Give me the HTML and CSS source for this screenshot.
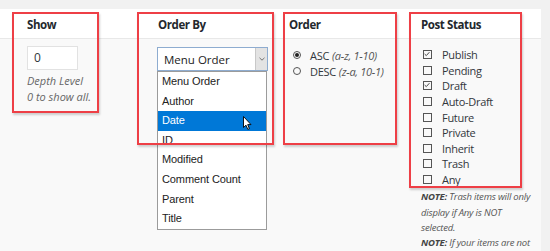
FILE: index.html
```html
<!DOCTYPE html>
<html>
<head>
<meta charset="utf-8">
<link rel="stylesheet" href="styles.css">
</head>
<body>
<div class="topbar"></div>
<div class="wrap">
  <div class="panel">
    <div class="row head">
      <div class="th">Show</div>
      <div class="th">Order By</div>
      <div class="th">Order</div>
      <div class="th">Post Status</div>
    </div>
    <div class="row body">
      <div class="col show">
        <div class="num">0</div>
        <div class="help">Depth Level<br>0 to show all.</div>
      </div>
      <div class="col orderby">
        <div class="select">
          <span class="sel-text">Menu Order</span>
          <span class="sel-btn"><svg width="6" height="4" viewBox="0 0 6 4"><path d="M0.5 0.8 L3 3.2 L5.5 0.8" fill="none" stroke="#666" stroke-width="0.9"/></svg></span>
        </div>
        <ul class="listbox">
          <li>Menu Order</li>
          <li>Author</li>
          <li class="hl">Date</li>
          <li>ID</li>
          <li>Modified</li>
          <li>Comment Count</li>
          <li>Parent</li>
          <li>Title</li>
        </ul>
      </div>
      <div class="col order">
        <div class="opt"><span class="radio on"></span>ASC <em>(a-z, 1-10)</em></div>
        <div class="opt"><span class="radio"></span>DESC <em>(z-a, 10-1)</em></div>
      </div>
      <div class="col status">
        <div class="chk"><span class="box on"><svg width="8" height="8" viewBox="0 0 8 8"><path d="M1.6 4 L3.3 5.6 L6.4 2.2" fill="none" stroke="#333" stroke-width="0.9"/></svg></span>Publish</div>
        <div class="chk"><span class="box"></span>Pending</div>
        <div class="chk"><span class="box on"><svg width="8" height="8" viewBox="0 0 8 8"><path d="M1.6 4 L3.3 5.6 L6.4 2.2" fill="none" stroke="#333" stroke-width="0.9"/></svg></span>Draft</div>
        <div class="chk"><span class="box"></span>Auto-Draft</div>
        <div class="chk"><span class="box"></span>Future</div>
        <div class="chk"><span class="box"></span>Private</div>
        <div class="chk"><span class="box"></span>Inherit</div>
        <div class="chk"><span class="box"></span>Trash</div>
        <div class="chk"><span class="box"></span>Any</div>
        <div class="note"><b>NOTE:</b> Trash items will only<br>display if Any is NOT<br>selected.<br><b>NOTE:</b> If your items are not</div>
      </div>
    </div>
  </div>
  <div class="side"></div>
</div>
<div class="mark m1"></div>
<div class="mark m2"></div>
<div class="mark m3"></div>
<div class="mark m4"></div>
<svg class="cursor" width="10" height="15" viewBox="0 0 10 15"><path d="M0.5 0.5 L0.5 11.5 L3 9.2 L4.8 13.4 L6.4 12.7 L4.7 8.6 L8 8.6 Z" fill="#fff" stroke="#000" stroke-width="0.9" stroke-linejoin="round"/></svg>
</body>
</html>
```
FILE: styles.css
```css
html, body {
  margin: 0;
  padding: 0;
}
body {
  width: 550px;
  height: 251px;
  overflow: hidden;
  background: #f1f1f1;
  font-family: "Open Sans", "Noto Sans", sans-serif;
  color: #32373c;
  position: relative;
}
.topbar {
  height: 9px;
  background: #f1f1f1;
}
.wrap {
  display: flex;
  height: 242px;
}
.panel {
  width: 541px;
  background: #f9f9f9;
}
.side {
  flex: 1;
  background: #f1f1f1;
}
.row {
  display: grid;
  grid-template-columns: 131px 131px 132px 1fr;
  padding-left: 27px;
}
.head {
  height: 29px;
  background: #fff;
  border-bottom: 1px solid #e8e8e8;
  align-items: center;
}
.th {
  font-size: 11.5px;
  font-weight: 700;
  letter-spacing: -0.4px;
  color: #23282d;
  padding-top: 1px;
}
.body {
  padding-top: 7px;
}
.num {
  height: 22px;
  border: 1px solid #e2e2e2;
  background: #fff;
  font-size: 12px;
  line-height: 22px;
  padding-left: 6px;
  width: 43px;
  color: #32373c;
}
.help {
  margin-top: 3px;
  font-size: 11px;
  font-style: italic;
  letter-spacing: 0;
  line-height: 16px;
  color: #666;
}
.orderby {
  margin-left: -1px;
  padding-top: 1px;
}
.select {
  width: 109px;
  height: 22px;
  border: 1px solid #8eacd0;
  background: #fff;
  display: flex;
  align-items: center;
}
.sel-text {
  flex: 1;
  font-size: 11.5px;
  padding-left: 6px;
  color: #222;
}
.sel-btn {
  width: 11px;
  height: 22px;
  background: #e3e3e3;
  border-left: 1px solid #c8c8c8;
  display: flex;
  align-items: center;
  justify-content: center;
}
.listbox {
  list-style: none;
  margin: 0;
  padding: 0;
  width: 108px;
  border: 1px solid #9b9b9b;
  background: #fff;
}
.listbox li {
  height: 19.6px;
  line-height: 19.6px;
  padding-left: 4px;
  font-family: "Liberation Sans", sans-serif;
  font-size: 11px;
  letter-spacing: -0.1px;
  color: #222;
}
.listbox li.hl {
  background: #0078d7;
  color: #fff;
}
.order {
  padding-top: 1px;
  padding-left: 4px;
}
.opt {
  display: flex;
  align-items: center;
  height: 16px;
  font-size: 11px;
  letter-spacing: -0.3px;
  color: #32373c;
}
.opt em {
  margin-left: 3px;
  color: #555;
}
.radio {
  width: 6px;
  height: 6px;
  border: 1px solid #555;
  border-radius: 50%;
  margin-right: 9px;
  position: relative;
  flex: none;
}
.radio.on::after {
  content: "";
  position: absolute;
  left: 1px;
  top: 1px;
  width: 4px;
  height: 4px;
  border-radius: 50%;
  background: #222;
}
.status {
  padding-top: 1px;
  padding-left: 2px;
}
.chk {
  display: flex;
  align-items: center;
  height: 15.6px;
  font-size: 11px;
  letter-spacing: -0.3px;
  color: #32373c;
}
.box {
  width: 7px;
  height: 7px;
  border: 1px solid #555;
  margin-right: 10px;
  flex: none;
  position: relative;
}
.box svg {
  position: absolute;
  left: -1px;
  top: -1px;
}
.note {
  margin-top: 2px;
  margin-left: -2px;
  font-size: 9.5px;
  font-style: italic;
  letter-spacing: -0.2px;
  line-height: 15.3px;
  color: #555;
  white-space: nowrap;
}
.note b {
  color: #444;
}
.mark {
  position: absolute;
  border: 2px solid #ee3f46;
  box-shadow: 1px 2px 2px rgba(0, 0, 0, 0.18);
  box-sizing: border-box;
}
.m1 { left: 12px; top: 12px; width: 87px; height: 101px; }
.m2 { left: 137px; top: 12px; width: 137px; height: 133px; }
.m3 { left: 283px; top: 12px; width: 114px; height: 133px; }
.m4 { left: 409px; top: 12px; width: 113px; height: 176px; }
.cursor {
  position: absolute;
  left: 243px;
  top: 116px;
}
```
